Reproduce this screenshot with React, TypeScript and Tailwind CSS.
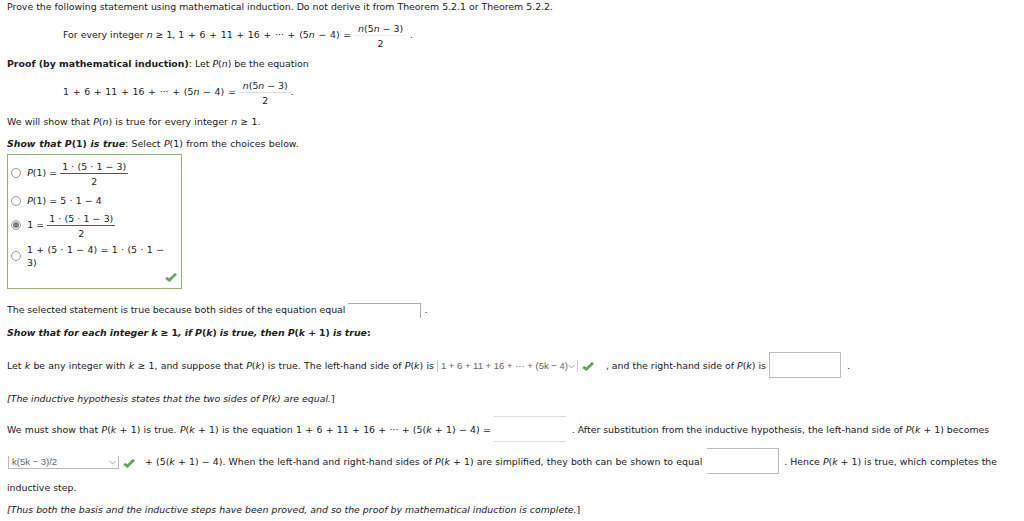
import React from 'react';

const V = ({ children }: { children: React.ReactNode }) => <i className="font-normal">{children}</i>;

const Frac = ({ top, bottom, line = 'border-[#555]', pad = 'px-[2px]' }: { top: React.ReactNode; bottom: React.ReactNode; line?: string; pad?: string }) => (
  <span className="inline-flex flex-col items-center mt-[2px]">
    <span className={`h-[14px] leading-[13px] border-b ${pad} ${line}`}>{top}</span>
    <span className="h-[15px] leading-[15px]">{bottom}</span>
  </span>
);

const Check = ({ className = '' }: { className?: string }) => (
  <svg viewBox="0 0 12 10" className={`w-[12px] h-[10px] ${className}`}>
    <path d="M1.2 5.8 L4.4 8.2 L11 1.8" fill="none" stroke="#62a85c" strokeWidth="2.8" />
  </svg>
);

const Radio = ({ checked = false }: { checked?: boolean }) => (
  <span className="shrink-0 w-[10px] h-[10px] rounded-full border border-[#999] bg-white flex items-center justify-center">
    {checked && <span className="w-[6px] h-[6px] rounded-full bg-[#808080]" />}
  </span>
);

const Blank = ({ className }: { className: string }) => <span className={`inline-block shrink-0 ${className}`} />;

const Dropdown = ({ label, className }: { label: string; className: string }) => (
  <span className={`inline-flex shrink-0 items-center justify-between text-[9.5px] text-[#666] font-['Liberation_Sans',sans-serif] ${className}`}>
    <span>{label}</span>
    <svg viewBox="0 0 10 6" className="w-[7px] h-[5px] mr-[2px]">
      <path d="M1 1 L5 5 L9 1" fill="none" stroke="#777" strokeWidth="1" />
    </svg>
  </span>
);

const App: React.FC = () => {
  return (
    <div className="w-[1024px] h-[521px] overflow-hidden bg-white pl-[7px] pt-[1px] text-[9.4px] text-[#222] font-['DejaVu_Sans',sans-serif] whitespace-nowrap">
      <div className="h-[11px] leading-[11px]">Prove the following statement using mathematical induction. Do not derive it from Theorem 5.2.1 or Theorem 5.2.2.</div>

      <div className="mt-[8px] h-[30px] pl-[56px] flex items-center gap-[3px]">
        <span>For every integer <V>n</V> ≥ 1, <span className="[word-spacing:0.7px]">1 + 6 + 11 + 16 + ··· + (5<V>n</V> − 4) =</span></span>
        <Frac top={<><V>n</V>(5<V>n</V> − 3)</>} bottom="2" line="border-[#eee]" pad="px-[4px]" />
        <span>.</span>
      </div>

      <div className="mt-[8px] h-[11px] leading-[11px]"><b>Proof (by mathematical induction)</b>: Let <V>P</V>(<V>n</V>) be the equation</div>

      <div className="mt-[8px] h-[30px] pl-[56px] flex items-center gap-[3px]">
        <span className="[word-spacing:0.7px]">1 + 6 + 11 + 16 + ··· + (5<V>n</V> − 4) =</span>
        <Frac top={<><V>n</V>(5<V>n</V> − 3)</>} bottom="2" line="border-[#ddd]" pad="px-[4px]" />
        <span className="-ml-[4px]">.</span>
      </div>

      <div className="mt-[9px] h-[11px] leading-[11px] [word-spacing:0.25px]">We will show that <V>P</V>(<V>n</V>) is true for every integer <V>n</V> ≥ 1.</div>

      <div className="mt-[11px] h-[11px] leading-[11px] [word-spacing:0.4px]"><b><i>Show that P</i>(1)<i> is true</i></b>: Select <V>P</V>(1) from the choices below.</div>

      <div className="mt-[5px] w-[175px] h-[135px] border border-[#8db46f] pl-[3px] relative [word-spacing:0.2px]">
        <div className="mt-[4px] h-[28px] flex items-center gap-[3px]">
          <Radio />
          <span>&nbsp;<V>P</V>(1) =</span>
          <Frac top="1 · (5 · 1 − 3)" bottom="2" />
        </div>
        <div className="mt-[6px] h-[16px] flex items-center gap-[3px]">
          <Radio />
          <span>&nbsp;<V>P</V>(1) = 5 · 1 − 4</span>
        </div>
        <div className="mt-[2px] h-[28px] flex items-center gap-[3px]">
          <Radio checked />
          <span>&nbsp;1 =</span>
          <Frac top="1 · (5 · 1 − 3)" bottom="2" />
        </div>
        <div className="mt-[4px] flex items-center gap-[3px] [word-spacing:0.4px]">
          <Radio />
          <span className="pl-[3px] leading-[13px]">1 + (5 · 1 − 4) = 1 · (5 · 1 −<br />3)</span>
        </div>
        <Check className="absolute right-[4px] bottom-[6px]" />
      </div>

      <div className="mt-[13px] h-[16px] flex items-center">
        <span className="[word-spacing:-0.25px]">The selected statement is true because both sides of the equation equal</span>
        <Blank className="ml-[3px] w-[73px] h-[15px] border-t border-r border-[#aaa]" />
        <span className="ml-[3px]">.</span>
      </div>

      <div className="mt-[9px] h-[11px] leading-[11px] [word-spacing:-0.2px]"><b><i>Show that for each integer k</i> ≥ 1<i>, if P</i>(<i>k</i>)<i> is true, then P</i>(<i>k</i> + 1)<i> is true</i>:</b></div>

      <div className="mt-[15px] h-[26px] flex items-center">
        <span className="[word-spacing:0.25px]">Let <V>k</V> be any integer with <V>k</V> ≥ 1, and suppose that <V>P</V>(<V>k</V>) is true. The left-hand side of <V>P</V>(<V>k</V>) is</span>
        <Dropdown label="1 + 6 + 11 + 16 + ··· + (5k − 4)" className="ml-[3px] w-[141px] h-[12px] pl-[3px] border-l border-r border-[#ccc]" />
        <Check className="ml-[4px]" />
        <span className="ml-[12px]">, and the right-hand side of <V>P</V>(<V>k</V>) is</span>
        <Blank className="ml-[3px] mb-[3px] w-[72px] h-[26px] border border-[#bbb]" />
        <span className="ml-[6px]">.</span>
      </div>

      <div className="mt-[14px] h-[11px] leading-[11px]"><i>[The inductive hypothesis states that the two sides of P(k) are equal.</i>]</div>

      <div className="mt-[13px] h-[26px] flex items-center">
        <span className="[word-spacing:0.3px]">We must show that <V>P</V>(<V>k</V> + 1) is true. <V>P</V>(<V>k</V> + 1) is the equation 1 + 6 + 11 + 16 + ··· + (5(<V>k</V> + 1) − 4) =</span>
        <Blank className="ml-[3px] mb-[2px] w-[72px] h-[26px] border-t border-b border-[#ddd]" />
        <span className="ml-[6px]">. After substitution from the inductive hypothesis, the left-hand side of <V>P</V>(<V>k</V> + 1) becomes</span>
      </div>

      <div className="mt-[6px] h-[27px] flex items-center">
        <Dropdown label="k(5k − 3)/2" className="ml-[1px] w-[111px] h-[13px] pl-[3px] border-l border-r border-b border-[#bbb]" />
        <Check className="ml-[4px]" />
        <span className="ml-[10px] [word-spacing:0.2px]">+ (5(<V>k</V> + 1) − 4). When the left-hand and right-hand sides of <V>P</V>(<V>k</V> + 1) are simplified, they both can be shown to equal</span>
        <Blank className="ml-[5px] mb-[4px] w-[72px] h-[26px] border-t border-b border-r border-[#bbb]" />
        <span className="ml-[5px]">. Hence <V>P</V>(<V>k</V> + 1) is true, which completes the</span>
      </div>

      <div className="mt-[6px] h-[11px] leading-[11px]">inductive step.</div>
      <div className="mt-[11px] h-[11px] leading-[11px]"><i>[Thus both the basis and the inductive steps have been proved, and so the proof by mathematical induction is complete.</i>]</div>
    </div>
  );
};

export default App;
